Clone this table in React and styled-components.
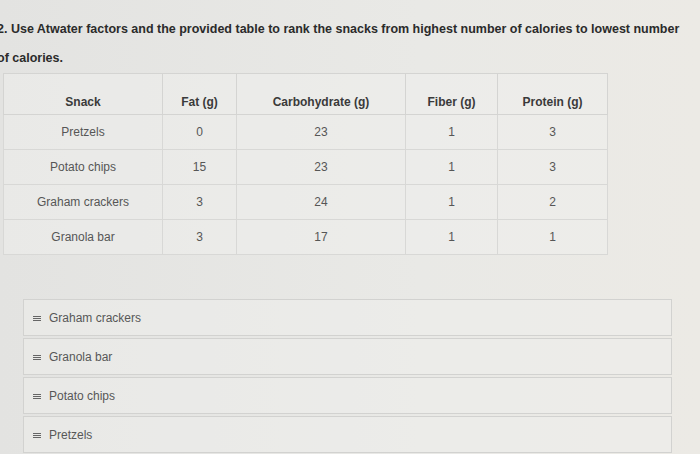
import styled, { createGlobalStyle } from 'styled-components';

const GlobalStyle = createGlobalStyle`
  html, body {
    margin: 0;
    padding: 0;
  }
  body {
    width: 700px;
    height: 454px;
    overflow: hidden;
    background: linear-gradient(90deg, #e3e3e1 0%, #e9e9e6 60%, #eceae5 100%);
    font-family: "Liberation Sans", Arial, sans-serif;
  }
`;

const snacks = [
  { name: 'Pretzels', fat: 0, carb: 23, fiber: 1, protein: 3 },
  { name: 'Potato chips', fat: 15, carb: 23, fiber: 1, protein: 3 },
  { name: 'Graham crackers', fat: 3, carb: 24, fiber: 1, protein: 2 },
  { name: 'Granola bar', fat: 3, carb: 17, fiber: 1, protein: 1 },
];

const ranking = ['Graham crackers', 'Granola bar', 'Potato chips', 'Pretzels'];

function App() {
  return (
    <Page>
      <GlobalStyle />
      <Question>
        2. Use Atwater factors and the provided table to rank the snacks from highest number of calories to lowest number
        of calories.
      </Question>

      <Table>
        <thead>
          <tr>
            <HeadCell $w={159}>Snack</HeadCell>
            <HeadCell $w={74}>Fat (g)</HeadCell>
            <HeadCell $w={169}>Carbohydrate (g)</HeadCell>
            <HeadCell $w={92}>Fiber (g)</HeadCell>
            <HeadCell $w={110}>Protein (g)</HeadCell>
          </tr>
        </thead>
        <tbody>
          {snacks.map((s) => (
            <tr key={s.name}>
              <Cell>{s.name}</Cell>
              <Cell>{s.fat}</Cell>
              <Cell>{s.carb}</Cell>
              <Cell>{s.fiber}</Cell>
              <Cell>{s.protein}</Cell>
            </tr>
          ))}
        </tbody>
      </Table>

      <RankList>
        {ranking.map((name) => (
          <RankItem key={name}>
            <Handle>
              <span />
              <span />
              <span />
            </Handle>
            {name}
          </RankItem>
        ))}
      </RankList>
    </Page>
  );
}

export default App;

const Page = styled.div`
  width: 700px;
  height: 454px;
  position: relative;
  overflow: hidden;
`;

const Question = styled.p`
  margin: 15px 0 0 -3px;
  width: 684px;
  font-size: 12.5px;
  font-weight: bold;
  line-height: 29px;
  color: #2b2b2b;
`;

const Table = styled.table`
  margin: 0 0 0 3px;
  width: 605px;
  border-collapse: collapse;
  table-layout: fixed;
  background: rgba(240, 240, 238, 0.5);
  border: 1px solid #d4d4d2;
`;

const HeadCell = styled.th`
  width: ${({ $w }) => $w}px;
  height: 41px;
  box-sizing: border-box;
  padding: 16px 0 0;
  border: 1px solid #d4d4d2;
  font-size: 12px;
  font-weight: bold;
  color: #3a3a3a;
  text-align: center;
`;

const Cell = styled.td`
  height: 35px;
  box-sizing: border-box;
  padding: 0;
  border: 1px solid #d8d8d6;
  font-size: 12px;
  color: #565656;
  text-align: center;
`;

const RankList = styled.div`
  margin: 44px 0 0 23px;
  width: 649px;
  display: flex;
  flex-direction: column;
  gap: 2px;
`;

const RankItem = styled.div`
  height: 37px;
  box-sizing: border-box;
  border: 1px solid #d2d2d0;
  background: rgba(240, 240, 238, 0.45);
  display: flex;
  align-items: center;
  gap: 8px;
  padding-left: 9px;
  font-size: 12px;
  color: #575757;
`;

const Handle = styled.div`
  width: 8px;
  display: flex;
  flex-direction: column;
  gap: 1px;
  margin-top: 2px;

  span {
    display: block;
    height: 1px;
    background: #666;
  }
`;
